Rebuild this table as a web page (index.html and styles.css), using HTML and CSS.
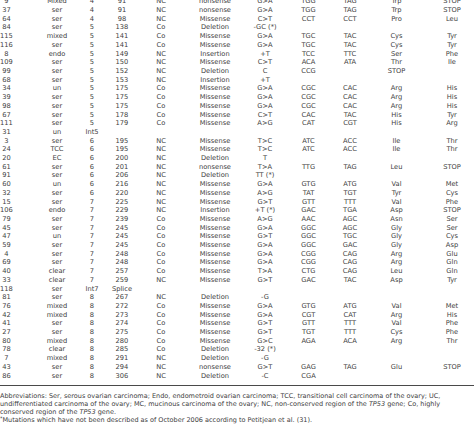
FILE: index.html
```html
<!DOCTYPE html>
<html>
<head>
<meta charset="utf-8">
<link rel="stylesheet" href="styles.css">
</head>
<body>
<table class="mut">
<tbody>
<tr><td>9</td><td>Mixed</td><td>4</td><td>91</td><td>NC</td><td>nonsense</td><td>G&gt;A</td><td>TGG</td><td>TAG</td><td>Trp</td><td>STOP</td></tr>
<tr><td>37</td><td>ser</td><td>4</td><td>91</td><td>NC</td><td>nonsense</td><td>G&gt;A</td><td>TGG</td><td>TAG</td><td>Trp</td><td>STOP</td></tr>
<tr><td>64</td><td>ser</td><td>4</td><td>98</td><td>NC</td><td>Missense</td><td>C&gt;T</td><td>CCT</td><td>CCT</td><td>Pro</td><td>Leu</td></tr>
<tr><td>84</td><td>ser</td><td>5</td><td>138</td><td>Co</td><td>Deletion</td><td>-GC (*)</td><td></td><td></td><td></td><td></td></tr>
<tr><td>115</td><td>mixed</td><td>5</td><td>141</td><td>Co</td><td>Missense</td><td>G&gt;A</td><td>TGC</td><td>TAC</td><td>Cys</td><td>Tyr</td></tr>
<tr><td>116</td><td>ser</td><td>5</td><td>141</td><td>Co</td><td>Missense</td><td>G&gt;A</td><td>TGC</td><td>TAC</td><td>Cys</td><td>Tyr</td></tr>
<tr><td>8</td><td>endo</td><td>5</td><td>149</td><td>NC</td><td>Insertion</td><td>+T</td><td>TCC</td><td>TTC</td><td>Ser</td><td>Phe</td></tr>
<tr><td>109</td><td>ser</td><td>5</td><td>150</td><td>NC</td><td>Missense</td><td>C&gt;T</td><td>ACA</td><td>ATA</td><td>Thr</td><td>Ile</td></tr>
<tr><td>99</td><td>ser</td><td>5</td><td>152</td><td>NC</td><td>Deletion</td><td>C</td><td>CCG</td><td></td><td>STOP</td><td></td></tr>
<tr><td>68</td><td>ser</td><td>5</td><td>153</td><td>NC</td><td>Insertion</td><td>+T</td><td></td><td></td><td></td><td></td></tr>
<tr><td>34</td><td>un</td><td>5</td><td>175</td><td>Co</td><td>Missense</td><td>G&gt;A</td><td>CGC</td><td>CAC</td><td>Arg</td><td>His</td></tr>
<tr><td>39</td><td>ser</td><td>5</td><td>175</td><td>Co</td><td>Missense</td><td>G&gt;A</td><td>CGC</td><td>CAC</td><td>Arg</td><td>His</td></tr>
<tr><td>98</td><td>ser</td><td>5</td><td>175</td><td>Co</td><td>Missense</td><td>G&gt;A</td><td>CGC</td><td>CAC</td><td>Arg</td><td>His</td></tr>
<tr><td>67</td><td>ser</td><td>5</td><td>178</td><td>Co</td><td>Missense</td><td>C&gt;T</td><td>CAC</td><td>TAC</td><td>His</td><td>Tyr</td></tr>
<tr><td>111</td><td>ser</td><td>5</td><td>179</td><td>Co</td><td>Missense</td><td>A&gt;G</td><td>CAT</td><td>CGT</td><td>His</td><td>Arg</td></tr>
<tr><td>31</td><td>un</td><td>Int5</td><td></td><td></td><td></td><td></td><td></td><td></td><td></td><td></td></tr>
<tr><td>3</td><td>ser</td><td>6</td><td>195</td><td>NC</td><td>Missense</td><td>T&gt;C</td><td>ATC</td><td>ACC</td><td>Ile</td><td>Thr</td></tr>
<tr><td>24</td><td>TCC</td><td>6</td><td>195</td><td>NC</td><td>Missense</td><td>T&gt;C</td><td>ATC</td><td>ACC</td><td>Ile</td><td>Thr</td></tr>
<tr><td>20</td><td>EC</td><td>6</td><td>200</td><td>NC</td><td>Deletion</td><td>T</td><td></td><td></td><td></td><td></td></tr>
<tr><td>61</td><td>ser</td><td>6</td><td>201</td><td>NC</td><td>nonsense</td><td>T&gt;A</td><td>TTG</td><td>TAG</td><td>Leu</td><td>STOP</td></tr>
<tr><td>91</td><td>ser</td><td>6</td><td>206</td><td>NC</td><td>Deletion</td><td>TT (*)</td><td></td><td></td><td></td><td></td></tr>
<tr><td>60</td><td>un</td><td>6</td><td>216</td><td>NC</td><td>Missense</td><td>G&gt;A</td><td>GTG</td><td>ATG</td><td>Val</td><td>Met</td></tr>
<tr><td>32</td><td>ser</td><td>6</td><td>220</td><td>NC</td><td>Missense</td><td>A&gt;G</td><td>TAT</td><td>TGT</td><td>Tyr</td><td>Cys</td></tr>
<tr><td>15</td><td>ser</td><td>7</td><td>225</td><td>NC</td><td>Missense</td><td>G&gt;T</td><td>GTT</td><td>TTT</td><td>Val</td><td>Phe</td></tr>
<tr><td>106</td><td>endo</td><td>7</td><td>229</td><td>NC</td><td>Insertion</td><td>+T (*)</td><td>GAC</td><td>TGA</td><td>Asp</td><td>STOP</td></tr>
<tr><td>79</td><td>ser</td><td>7</td><td>239</td><td>Co</td><td>Missense</td><td>A&gt;G</td><td>AAC</td><td>AGC</td><td>Asn</td><td>Ser</td></tr>
<tr><td>45</td><td>ser</td><td>7</td><td>245</td><td>Co</td><td>Missense</td><td>G&gt;A</td><td>GGC</td><td>AGC</td><td>Gly</td><td>Ser</td></tr>
<tr><td>47</td><td>un</td><td>7</td><td>245</td><td>Co</td><td>Missense</td><td>G&gt;T</td><td>GGC</td><td>TGC</td><td>Gly</td><td>Cys</td></tr>
<tr><td>59</td><td>ser</td><td>7</td><td>245</td><td>Co</td><td>Missense</td><td>G&gt;A</td><td>GGC</td><td>GAC</td><td>Gly</td><td>Asp</td></tr>
<tr><td>4</td><td>ser</td><td>7</td><td>248</td><td>Co</td><td>Missense</td><td>G&gt;A</td><td>CGG</td><td>CAG</td><td>Arg</td><td>Glu</td></tr>
<tr><td>69</td><td>ser</td><td>7</td><td>248</td><td>Co</td><td>Missense</td><td>G&gt;A</td><td>CGG</td><td>CAG</td><td>Arg</td><td>Gln</td></tr>
<tr><td>40</td><td>clear</td><td>7</td><td>257</td><td>Co</td><td>Missense</td><td>T&gt;A</td><td>CTG</td><td>CAG</td><td>Leu</td><td>Gln</td></tr>
<tr><td>33</td><td>clear</td><td>7</td><td>259</td><td>NC</td><td>Missense</td><td>G&gt;T</td><td>GAC</td><td>TAC</td><td>Asp</td><td>Tyr</td></tr>
<tr><td>118</td><td>ser</td><td>Int7</td><td>Splice</td><td></td><td></td><td></td><td></td><td></td><td></td><td></td></tr>
<tr><td>81</td><td>ser</td><td>8</td><td>267</td><td>NC</td><td>Deletion</td><td>-G</td><td></td><td></td><td></td><td></td></tr>
<tr><td>76</td><td>mixed</td><td>8</td><td>272</td><td>Co</td><td>Missense</td><td>G&gt;A</td><td>GTG</td><td>ATG</td><td>Val</td><td>Met</td></tr>
<tr><td>42</td><td>mixed</td><td>8</td><td>273</td><td>Co</td><td>Missense</td><td>G&gt;A</td><td>CGT</td><td>CAT</td><td>Arg</td><td>His</td></tr>
<tr><td>41</td><td>ser</td><td>8</td><td>274</td><td>Co</td><td>Missense</td><td>G&gt;T</td><td>GTT</td><td>TTT</td><td>Val</td><td>Phe</td></tr>
<tr><td>27</td><td>ser</td><td>8</td><td>275</td><td>Co</td><td>Missense</td><td>G&gt;T</td><td>TGT</td><td>TTT</td><td>Cys</td><td>Phe</td></tr>
<tr><td>80</td><td>mixed</td><td>8</td><td>280</td><td>Co</td><td>Missense</td><td>G&gt;C</td><td>AGA</td><td>ACA</td><td>Arg</td><td>Thr</td></tr>
<tr><td>78</td><td>clear</td><td>8</td><td>285</td><td>Co</td><td>Deletion</td><td>-32 (*)</td><td></td><td></td><td></td><td></td></tr>
<tr><td>7</td><td>mixed</td><td>8</td><td>291</td><td>NC</td><td>Deletion</td><td>-G</td><td></td><td></td><td></td><td></td></tr>
<tr><td>43</td><td>ser</td><td>8</td><td>294</td><td>NC</td><td>nonsense</td><td>G&gt;T</td><td>GAG</td><td>TAG</td><td>Glu</td><td>STOP</td></tr>
<tr><td>86</td><td>ser</td><td>8</td><td>306</td><td>NC</td><td>Deletion</td><td>-C</td><td>CGA</td><td></td><td></td><td></td></tr>
</tbody>
</table>
<div class="notes">
<p class="note">Abbreviations: Ser, serous ovarian carcinoma; Endo, endometroid ovarian carcinoma; TCC, transitional cell carcinoma of the ovary; UC,<br>undifferentiated carcinoma of the ovary; MC, mucinous carcinoma of the ovary; NC, non-conserved region of the <i>TP53</i> gene; Co, highly<br>conserved region of the <i>TP53</i> gene.</p>
<p class="note"><sup>*</sup>Mutations which have not been described as of October 2006 according to Petitjean et al. (31).</p>
</div>
</body>
</html>
```
FILE: styles.css
```css
html, body {
  margin: 0;
  padding: 0;
  background: #ffffff;
  overflow: hidden;
}
body {
  font-family: "DejaVu Sans", Verdana, sans-serif;
  color: #404040;
  width: 474px;
  height: 428px;
}
.mut {
  border-collapse: collapse;
  table-layout: fixed;
  width: 474px;
  margin-top: -2.65px;
  font-size: 6.7px;
}
.mut td {
  box-sizing: border-box;
  padding: 0;
  height: 8.7px;
  line-height: 8.7px;
  text-align: center;
  white-space: nowrap;
}
.mut td:nth-child(1) { width: 31.75px; padding-right: 18.75px; }
.mut td:nth-child(2) { width: 42.75px; padding-left: 7.75px; }
.mut td:nth-child(3) { width: 32.5px; padding-left: 2.5px; }
.mut td:nth-child(4) { width: 34.5px; padding-right: 4.5px; }
.mut td:nth-child(5) { width: 46.5px; padding-right: 7.5px; }
.mut td:nth-child(6) { width: 52px; padding-left: 2px; }
.mut td:nth-child(7) { width: 46.75px; padding-left: 3.25px; }
.mut td:nth-child(8) { width: 42.5px; padding-left: 1px; }
.mut td:nth-child(9) { width: 44px; padding-right: 2.5px; }
.mut td:nth-child(10) { width: 51px; padding-right: 4.5px; }
.mut td:nth-child(11) { width: 49.75px; padding-left: 5.75px; }
.notes {
  margin-top: 4.5px;
  border-top: 1.5px solid #4a4a4a;
  padding-top: 5.8px;
}
.note {
  margin: 0;
  font-size: 6.5px;
  line-height: 8px;
  white-space: nowrap;
}
.note sup {
  font-size: 5px;
  line-height: 0;
  vertical-align: 2px;
}
```
